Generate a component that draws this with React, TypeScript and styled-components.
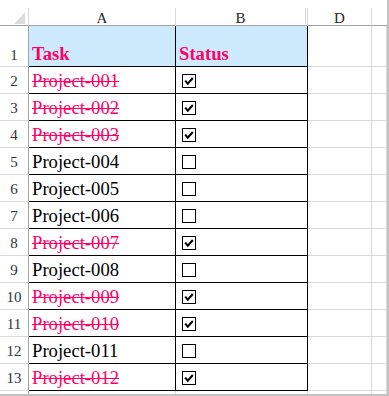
import React from "react";
import styled, { createGlobalStyle } from "styled-components";

const GlobalStyle = createGlobalStyle`
  html, body { margin: 0; padding: 0; background: #ffffff; }
`;

const PINK = "#ff0066";
const HEAD_LINE = "#a3a3a3";
const GRID = "#d9d9d9";

const Sheet = styled.div`
  width: 389px;
  height: 396px;
  box-sizing: border-box;
  padding-top: 8px;
  border-right: 2px solid #c2c2c2;
  border-bottom: 2px solid #c2c2c2;
  display: grid;
  grid-template-columns: 29px 147px 130px 2px 64px 15px;
  align-content: start;
  overflow: hidden;
  background: #fff;
`;

const Corner = styled.div`
  box-sizing: border-box;
  height: 18px;
  border-right: 1px solid ${GRID};
  border-bottom: 1px solid ${HEAD_LINE};
  display: flex;
  justify-content: flex-end;
  align-items: flex-end;
  padding: 0 3px 1px 0;
`;

const ColHead = styled.div<{ $noLine?: boolean }>`
  box-sizing: border-box;
  height: 18px;
  border-right: ${(p) => (p.$noLine ? "none" : `1px solid ${GRID}`)};
  border-bottom: 1px solid ${HEAD_LINE};
  padding-top: 3px;
  line-height: 14px;
  text-align: center;
  font-family: "Liberation Serif", "DejaVu Serif", serif;
  font-size: 15px;
  color: #2a2a2a;
`;

const RowHead = styled.div<{ $pt: number; $h: number }>`
  box-sizing: border-box;
  height: ${(p) => p.$h}px;
  border-right: 1px solid ${HEAD_LINE};
  border-bottom: 1px solid ${GRID};
  padding-top: ${(p) => p.$pt}px;
  line-height: 25px;
  text-align: center;
  font-family: "Liberation Serif", "DejaVu Serif", serif;
  font-size: 15px;
  color: #2d3340;
  overflow: hidden;
`;

const TaskCell = styled.div<{ $header?: boolean; $done?: boolean }>`
  box-sizing: border-box;
  height: ${(p) => (p.$header ? 41 : 27)}px;
  padding: ${(p) => (p.$header ? 15 : 1)}px 0 0 3px;
  line-height: 25px;
  background: ${(p) => (p.$header ? "#cde9fc" : "#fff")};
  border-right: 1px solid #000;
  border-bottom: 1px solid #000;
  font-family: "Liberation Serif", "Times New Roman", serif;
  font-size: 18.67px;
  font-weight: ${(p) => (p.$header ? 700 : 400)};
  color: ${(p) => (p.$header || p.$done ? PINK : "#000")};
  text-decoration: ${(p) => (p.$done ? "line-through" : "none")};
  text-decoration-thickness: 1.4px;
  white-space: nowrap;
  overflow: hidden;
`;

const StatusCell = styled(TaskCell)`
  grid-column: span 2;
  text-decoration: none;
`;

const CheckCell = styled.div`
  grid-column: span 2;
  box-sizing: border-box;
  height: 27px;
  padding: 7px 0 0 6px;
  border-right: 1px solid #000;
  border-bottom: 1px solid #000;
  display: flex;
  align-items: flex-start;
`;

const Box = styled.span`
  box-sizing: border-box;
  width: 14px;
  height: 14px;
  border: 1px solid #000;
  display: flex;
  align-items: center;
  justify-content: center;
  background: #fff;
`;

const EmptyCell = styled.div<{ $h: number; $noBottom?: boolean }>`
  box-sizing: border-box;
  height: ${(p) => p.$h}px;
  border-right: 1px solid ${GRID};
  border-bottom: ${(p) => (p.$noBottom ? "none" : `1px solid ${GRID}`)};
`;

const TailCell = styled.div<{ $head?: boolean; $span?: number }>`
  box-sizing: border-box;
  height: 3px;
  grid-column: span ${(p) => p.$span ?? 1};
  border-right: 1px solid ${(p) => (p.$head ? HEAD_LINE : GRID)};
`;

const tasks = [
  { name: "Project-001", done: true },
  { name: "Project-002", done: true },
  { name: "Project-003", done: true },
  { name: "Project-004", done: false },
  { name: "Project-005", done: false },
  { name: "Project-006", done: false },
  { name: "Project-007", done: true },
  { name: "Project-008", done: false },
  { name: "Project-009", done: true },
  { name: "Project-010", done: true },
  { name: "Project-011", done: false },
  { name: "Project-012", done: true },
];

function Check({ checked }: { checked: boolean }) {
  return (
    <Box>
      {checked && (
        <svg width="12" height="12" viewBox="0 0 12 12">
          <path d="M2.2 5.6 L4.8 8.6 L9.8 3" fill="none" stroke="#000" strokeWidth="2.1" />
        </svg>
      )}
    </Box>
  );
}

function RightGrid({ h, noBottom }: { h: number; noBottom?: boolean }) {
  return (
    <>
      <EmptyCell $h={h} $noBottom={noBottom} />
      <EmptyCell $h={h} $noBottom={noBottom} />
    </>
  );
}

export default function App() {
  return (
    <>
      <GlobalStyle />
      <Sheet>
        <Corner>
          <svg width="11" height="12" viewBox="0 0 11 12">
            <polygon points="11,0 11,12 0,12" fill="#dcdcdc" />
          </svg>
        </Corner>
        <ColHead>A</ColHead>
        <ColHead>B</ColHead>
        <ColHead />
        <ColHead>D</ColHead>
        <ColHead $noLine />

        <RowHead $pt={17} $h={41}>1</RowHead>
        <TaskCell $header>Task</TaskCell>
        <StatusCell $header>Status</StatusCell>
        <RightGrid h={41} />

        {tasks.map((t, i) => (
          <React.Fragment key={t.name}>
            <RowHead $pt={2} $h={27}>{i + 2}</RowHead>
            <TaskCell $done={t.done}>{t.name}</TaskCell>
            <CheckCell>
              <Check checked={t.done} />
            </CheckCell>
            <RightGrid h={27} />
          </React.Fragment>
        ))}

        <TailCell $head />
        <TailCell />
        <TailCell $span={2} />
        <TailCell />
        <TailCell />
      </Sheet>
    </>
  );
}
